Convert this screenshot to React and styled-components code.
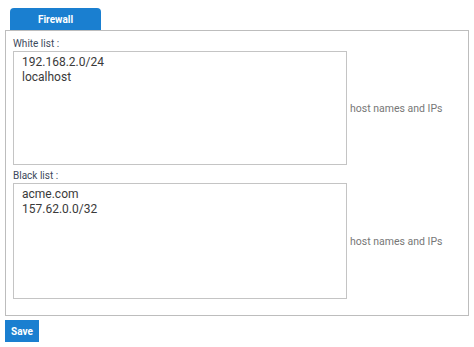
import React, { useState } from 'react';
import styled, { createGlobalStyle } from 'styled-components';

const GlobalStyle = createGlobalStyle`
  body {
    margin: 0;
    background: #fff;
    font-family: Roboto, "Liberation Sans", sans-serif;
  }
`;

const Page = styled.div`
  padding: 8px 5px 0 5px;
  width: 464px;
`;

const TabBar = styled.div`
  display: flex;
  padding-left: 5px;
`;

const Tab = styled.div`
  width: 91px;
  height: 22px;
  background: #1a7fd0;
  border-radius: 4px 4px 0 0;
  color: #fff;
  font-size: 10px;
  font-weight: 700;
  display: flex;
  align-items: center;
  justify-content: center;
`;

const Panel = styled.div`
  border: 1px solid #bdbdbd;
  padding: 6px 7px 16px 7px;
  display: flex;
  flex-direction: column;
`;

const Label = styled.div`
  font-size: 10px;
  color: #3d4a5c;
  height: 14px;
  line-height: 14px;
`;

const Row = styled.div`
  display: flex;
  align-items: center;
  margin-bottom: ${({ $gap }) => $gap || 0}px;
`;

const Area = styled.textarea`
  box-sizing: border-box;
  width: 334px;
  height: ${({ $h }) => $h}px;
  border: 1px solid #c4c4c4;
  resize: none;
  padding: 3px 8px;
  font-family: Roboto, "Liberation Sans", sans-serif;
  font-size: 12px;
  line-height: 15px;
  color: #3a3a3a;
  outline: none;
  margin: 0;
`;

const Hint = styled.span`
  margin-left: 3px;
  font-size: 10.5px;
  color: #777;
`;

const SaveButton = styled.button`
  margin-top: 4px;
  width: 34px;
  height: 22px;
  background: #1a7fd0;
  border: none;
  color: #fff;
  font-family: Roboto, "Liberation Sans", sans-serif;
  font-size: 10px;
  font-weight: 700;
  padding: 0;
`;

export default function App() {
  const [white, setWhite] = useState('192.168.2.0/24\nlocalhost');
  const [black, setBlack] = useState('acme.com\n157.62.0.0/32');

  return (
    <Page>
      <GlobalStyle />
      <TabBar>
        <Tab>Firewall</Tab>
      </TabBar>
      <Panel>
        <Label>White list :</Label>
        <Row $gap={4}>
          <Area $h={114} value={white} onChange={(e) => setWhite(e.target.value)} />
          <Hint>host names and IPs</Hint>
        </Row>
        <Label>Black list :</Label>
        <Row>
          <Area $h={116} value={black} onChange={(e) => setBlack(e.target.value)} />
          <Hint>host names and IPs</Hint>
        </Row>
      </Panel>
      <SaveButton>Save</SaveButton>
    </Page>
  );
}
